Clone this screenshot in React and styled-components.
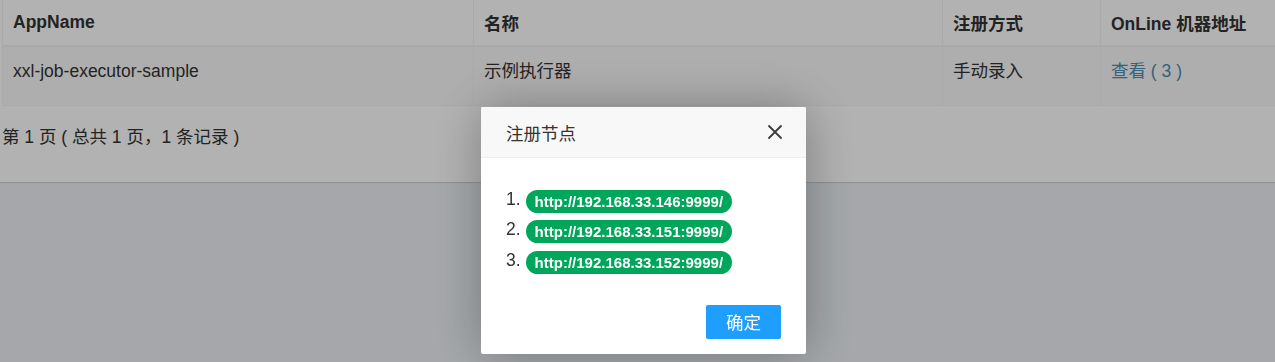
import React from 'react';
import styled, { createGlobalStyle } from 'styled-components';

const GlobalStyle = createGlobalStyle`
  html, body {
    margin: 0;
    padding: 0;
    background: #ecf0f5;
    overflow: hidden;
  }
  body {
    font-family: "Liberation Sans", Arial, "Noto Sans CJK SC", sans-serif;
    font-size: 17.5px;
    color: #333;
  }
`;

const Page = styled.div`
  width: 100vw;
  height: 100vh;
`;

const Box = styled.div`
  background: #fff;
  height: 182px;
  padding-left: 2px;
  box-sizing: border-box;
  overflow: hidden;
  box-shadow: 0 1px 1px rgba(0, 0, 0, 0.12);
`;

const Table = styled.table`
  width: 1300px;
  border-collapse: collapse;
  table-layout: fixed;
`;

const Th = styled.th`
  width: ${p => p.w ? `${p.w}px` : 'auto'};
  height: 46px;
  box-sizing: border-box;
  padding: 0 10px;
  text-align: left;
  font-weight: bold;
  border: 1px solid #f4f4f4;
  border-top: none;
  border-bottom: 2px solid #f4f4f4;
  vertical-align: middle;
`;

const Row = styled.tr`
  background: #f9f9f9;
`;

const Td = styled.td`
  height: 59px;
  box-sizing: border-box;
  padding: 12px 10px 8px;
  border: 1px solid #f4f4f4;
  vertical-align: top;
  line-height: 25px;
`;

const Link = styled.a`
  color: #4a8db5;
  text-decoration: none;
  cursor: pointer;
`;

const Pager = styled.div`
  padding-top: 19px;
  line-height: 25px;
`;

const Overlay = styled.div`
  position: fixed;
  inset: 0;
  background: rgba(0, 0, 0, 0.3);
`;

const Modal = styled.div`
  position: absolute;
  left: 481px;
  top: 107px;
  width: 325px;
  background: #fff;
  border-radius: 2px;
  box-shadow: 1px 1px 50px rgba(0, 0, 0, 0.3);
`;

const ModalHeader = styled.div`
  height: 51px;
  box-sizing: border-box;
  display: flex;
  align-items: center;
  justify-content: space-between;
  padding: 0 23px 0 25px;
  background: #f8f8f8;
  border-bottom: 1px solid #eee;
  border-radius: 2px 2px 0 0;
  color: #333;
`;

const Title = styled.span`
  font-size: 17.5px;
`;

const Close = styled.button`
  border: none;
  background: none;
  padding: 0;
  width: 16px;
  height: 16px;
  display: flex;
  cursor: pointer;
`;

const ModalBody = styled.div`
  padding: 28px 25px 0;
`;

const Item = styled.div`
  display: flex;
  align-items: center;
  gap: 5px;
  height: 30.5px;
`;

const Num = styled.span`
  color: #333;
  line-height: 25px;
  position: relative;
  top: -2px;
`;

const Badge = styled.span`
  display: inline-block;
  background: #00a65a;
  color: #fff;
  font-weight: bold;
  font-size: 15px;
  line-height: 1;
  padding: 4px 9px;
  border-radius: 12px;
`;

const ModalFooter = styled.div`
  display: flex;
  justify-content: flex-end;
  padding: 27px 25px 15px;
`;

const OkButton = styled.button`
  width: 75px;
  height: 34px;
  border: none;
  border-radius: 2px;
  background: #1e9fff;
  color: #fff;
  font-family: inherit;
  font-size: 17.5px;
  cursor: pointer;
`;

const nodes = [
  'http://192.168.33.146:9999/',
  'http://192.168.33.151:9999/',
  'http://192.168.33.152:9999/',
];

export default function App() {
  return (
    <Page>
      <GlobalStyle />
      <Box>
        <Table>
          <thead>
            <tr>
              <Th w={471}>AppName</Th>
              <Th w={469}>名称</Th>
              <Th w={158}>注册方式</Th>
              <Th>OnLine 机器地址</Th>
            </tr>
          </thead>
          <tbody>
            <Row>
              <Td>xxl-job-executor-sample</Td>
              <Td>示例执行器</Td>
              <Td>手动录入</Td>
              <Td><Link>查看 ( 3 )</Link></Td>
            </Row>
          </tbody>
        </Table>
        <Pager>第 1 页 ( 总共 1 页，1 条记录 )</Pager>
      </Box>
      <Overlay>
        <Modal>
          <ModalHeader>
            <Title>注册节点</Title>
            <Close aria-label="close">
              <svg width="16" height="16" viewBox="0 0 16 16">
                <path d="M2 2 L14 14 M14 2 L2 14" stroke="#3a3a3a" strokeWidth="1.8" strokeLinecap="round" />
              </svg>
            </Close>
          </ModalHeader>
          <ModalBody>
            {nodes.map((n, i) => (
              <Item key={n}>
                <Num>{i + 1}.</Num>
                <Badge>{n}</Badge>
              </Item>
            ))}
          </ModalBody>
          <ModalFooter>
            <OkButton>确定</OkButton>
          </ModalFooter>
        </Modal>
      </Overlay>
    </Page>
  );
}
